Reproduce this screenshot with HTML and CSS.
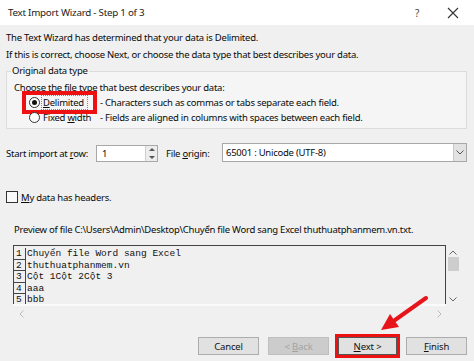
FILE: index.html
```html
<!DOCTYPE html>
<html lang="vi">
<head>
    <meta charset="UTF-8">
    <title>Text Import Wizard - Step 1 of 3</title>
    <link rel="stylesheet" href="styles.css">
</head>
<body>

    <div class="dialog">
        <div class="titlebar">
            <span class="title">Text Import Wizard - Step 1 of 3</span>
            <span class="help">?</span>
            <svg class="close" width="12" height="12" viewBox="0 0 12 12">
                <path d="M1 1 L11 11 M11 1 L1 11" stroke="#333" stroke-width="1.1" fill="none"/>
            </svg>
        </div>

        <div class="content">
            <p class="line">The Text Wizard has determined that your data is Delimited.</p>
            <p class="line">If this is correct, choose Next, or choose the data type that best describes your data.</p>

            <fieldset class="group">
                <legend>Original data type</legend>
                <p class="group-hint">Choose the file type that best describes your data:</p>
                <div class="choice">
                    <span class="choice-pick marked">
                        <span class="radio checked"></span>
                        <span class="choice-label focused"><u>D</u>elimited</span>
                    </span>
                    <span class="choice-desc">- Characters such as commas or tabs separate each field.</span>
                </div>
                <div class="choice">
                    <span class="choice-pick">
                        <span class="radio"></span>
                        <span class="choice-label">Fixed <u>w</u>idth</span>
                    </span>
                    <span class="choice-desc">- Fields are aligned in columns with spaces between each field.</span>
                </div>
            </fieldset>

            <div class="import-row">
                <span class="import-label">Start import at <u>r</u>ow:</span>
                <div class="spin">
                    <span class="spin-value">1</span>
                    <span class="spin-btns">
                        <span class="spin-up"></span>
                        <span class="spin-down"></span>
                    </span>
                </div>
                <span class="origin-label">File <u>o</u>rigin:</span>
                <div class="select">
                    <span class="select-value">65001 : Unicode (UTF-8)</span>
                    <span class="select-btn">
                        <svg width="8" height="5" viewBox="0 0 8 5"><path d="M0.5 0.5 L4 4 L7.5 0.5" stroke="#555" fill="none"/></svg>
                    </span>
                </div>
            </div>

            <div class="check-row">
                <span class="checkbox"></span>
                <span><u>M</u>y data has headers.</span>
            </div>

            <p class="preview-label">Preview of file C:\Users\Admin\Desktop\Chuyển file Word sang Excel thuthuatphanmem.vn.txt.</p>

            <div class="preview">
                <div class="preview-main">
                    <div class="preview-text">
                        <div class="prow"><span class="pnum">1</span><span>Chuyển file Word sang Excel</span></div>
                        <div class="prow"><span class="pnum">2</span><span>thuthuatphanmem.vn</span></div>
                        <div class="prow"><span class="pnum">3</span><span>Cột 1Cột 2Cột 3</span></div>
                        <div class="prow"><span class="pnum">4</span><span>aaa</span></div>
                        <div class="prow"><span class="pnum">5</span><span>bbb</span></div>
                    </div>
                    <div class="vscroll">
                        <svg width="8" height="5" viewBox="0 0 8 5"><path d="M0.5 4.5 L4 1 L7.5 4.5" stroke="#666" fill="none"/></svg>
                        <span class="vthumb"></span>
                        <svg class="vdown" width="8" height="5" viewBox="0 0 8 5"><path d="M0.5 0.5 L4 4 L7.5 0.5" stroke="#666" fill="none"/></svg>
                    </div>
                </div>
                <div class="hscroll">
                    <svg width="5" height="8" viewBox="0 0 5 8"><path d="M4.5 0.5 L1 4 L4.5 7.5" stroke="#bbb" fill="none"/></svg>
                    <svg width="5" height="8" viewBox="0 0 5 8"><path d="M0.5 0.5 L4 4 L0.5 7.5" stroke="#bbb" fill="none"/></svg>
                </div>
            </div>

            <div class="buttons">
                <button class="btn">Cancel</button>
                <button class="btn" disabled>&lt; <u>B</u>ack</button>
                <button class="btn marked-btn"><u>N</u>ext &gt;</button>
                <button class="btn"><u>F</u>inish</button>
            </div>
        </div>

        <svg class="arrow" width="474" height="361" viewBox="0 0 474 361">
            <line x1="426" y1="298" x2="395" y2="320" stroke="#e8141b" stroke-width="4" stroke-linecap="round"/>
            <polygon points="381,330 390,314 399,327" fill="#e8141b"/>
        </svg>
    </div>

</body>
</html>
```

FILE: styles.css
```css
* {
    margin: 0;
    padding: 0;
    box-sizing: border-box;
}
body {
    background: #f0f0f0;
    font-family: 'Noto Sans', 'Open Sans', sans-serif;
    font-size: 9.5px;
    letter-spacing: -0.25px;
    color: #0a0a0a;
}
.dialog {
    position: relative;
    width: 474px;
    height: 361px;
    background: #f0f0f0;
}
.titlebar {
    height: 25px;
    background: #fff;
    display: flex;
    align-items: center;
    padding-left: 8px;
}
.title {
    flex: 1;
    font-size: 9.8px;
    color: #222;
}
.help {
    font-size: 10px;
    color: #444;
    margin-right: 28px;
}
.close {
    margin-right: 15px;
}
.content {
    padding: 4px 7px 0 6px;
}
.line {
    line-height: 17px;
}
.group {
    margin-top: 1px;
    border: 1px solid #dcdcdc;
    background: #f5f5f5;
    padding: 2px 7px 3px 7px;
    height: 65px;
}
.group legend {
    margin-left: -3px;
    padding: 0 1px;
    line-height: 14px;
    font-size: 9.5px;
}
.group-hint {
    line-height: 14px;
    margin-top: 1px;
}
.choice {
    display: flex;
    align-items: center;
    height: 15px;
}
.choice-pick {
    display: flex;
    align-items: center;
    gap: 3px;
    flex: none;
    width: 68px;
    margin-left: 15px;
}
.choice-pick.marked {
    width: 75px;
    margin: -5px 0 -5px 8px;
    padding: 1px 4px 1px 3px;
    height: 23px;
    border: 4px solid #ee1111;
}
.radio {
    flex: none;
    width: 11px;
    height: 11px;
    border: 1px solid #333;
    border-radius: 50%;
    background: #fff;
    display: flex;
    align-items: center;
    justify-content: center;
}
.radio.checked::after {
    content: '';
    width: 5px;
    height: 5px;
    border-radius: 50%;
    background: #111;
}
.choice-label.focused {
    outline: 1px dotted #888;
    padding: 0 3px 0 1px;
    margin-left: -1px;
}
.choice-desc {
    margin-left: 3px;
    white-space: nowrap;
}
.import-row {
    display: flex;
    align-items: center;
    margin-top: 16px;
    height: 17px;
}
.import-label {
    width: 90px;
}
.spin {
    display: flex;
    width: 62px;
    height: 17px;
    border: 1px solid #a8a8a8;
    background: #fff;
}
.spin-value {
    flex: 1;
    padding-left: 5px;
    line-height: 15px;
}
.spin-btns {
    width: 12px;
    border-left: 1px solid #d0d0d0;
    background: #ececec;
    display: flex;
    flex-direction: column;
    align-items: center;
    justify-content: space-around;
}
.spin-up, .spin-down {
    width: 0;
    height: 0;
    border-left: 3px solid transparent;
    border-right: 3px solid transparent;
}
.spin-up {
    border-bottom: 3px solid #555;
}
.spin-down {
    border-top: 3px solid #555;
}
.origin-label {
    margin-left: 8px;
    width: 56px;
}
.select {
    flex: 1;
    display: flex;
    height: 19px;
    border: 1px solid #a8a8a8;
    background: #fff;
    margin-top: -2px;
}
.select-value {
    flex: 1;
    padding-left: 3px;
    line-height: 17px;
}
.select-btn {
    width: 13px;
    background: #e2e2e2;
    border-left: 1px solid #c8c8c8;
    display: flex;
    align-items: center;
    justify-content: center;
}
.check-row {
    display: flex;
    align-items: center;
    gap: 3px;
    margin-top: 29px;
    height: 12px;
}
.checkbox {
    width: 12px;
    height: 12px;
    border: 1px solid #333;
    background: #fafafa;
}
.preview-label {
    margin-top: 19px;
    padding-left: 8px;
    line-height: 16px;
}
.preview {
    margin: 7px 0 0 7px;
    width: 447px;
}
.preview-main {
    display: flex;
    height: 59px;
}
.preview-text {
    flex: 1;
    border: 1px solid #444;
    border-bottom: none;
    padding-top: 2px;
    font-family: 'Liberation Mono', 'DejaVu Sans Mono', monospace;
    font-size: 9.5px;
    letter-spacing: 0;
    color: #111;
    overflow: hidden;
}
.prow {
    display: flex;
    line-height: 11.5px;
    height: 11.5px;
}
.pnum {
    width: 12px;
    border-right: 1px solid #444;
    border-bottom: 1px solid #444;
    padding-left: 2px;
    margin-right: 1px;
}
.vscroll {
    width: 14px;
    display: flex;
    flex-direction: column;
    align-items: center;
    padding-top: 5px;
}
.vthumb {
    width: 11px;
    height: 14px;
    background: #cdcdcd;
    margin-top: 2px;
}
.vdown {
    margin-top: auto;
    margin-bottom: 2px;
}
.hscroll {
    height: 15px;
    border-top: 2px solid #fafafa;
    width: 433px;
    display: flex;
    align-items: center;
    justify-content: space-between;
    padding: 2px 4px 0 6px;
}
.buttons {
    display: flex;
    justify-content: flex-end;
    gap: 9px;
    margin-top: 18px;
}
.btn {
    width: 61px;
    height: 18px;
    border: 1px solid #adadad;
    background: #e1e1e1;
    font-family: 'Noto Sans', 'Open Sans', sans-serif;
    font-size: 9.5px;
    letter-spacing: -0.15px;
    color: #111;
}
.btn:disabled {
    background: #cccccc;
    border-color: #bfbfbf;
    color: #a3a3a3;
}
.marked-btn {
    width: 59px;
    outline: 3px solid #ee1111;
    outline-offset: 0;
    border: 1px solid #555;
}
.arrow {
    position: absolute;
    left: 0;
    top: 0;
    pointer-events: none;
}
```
